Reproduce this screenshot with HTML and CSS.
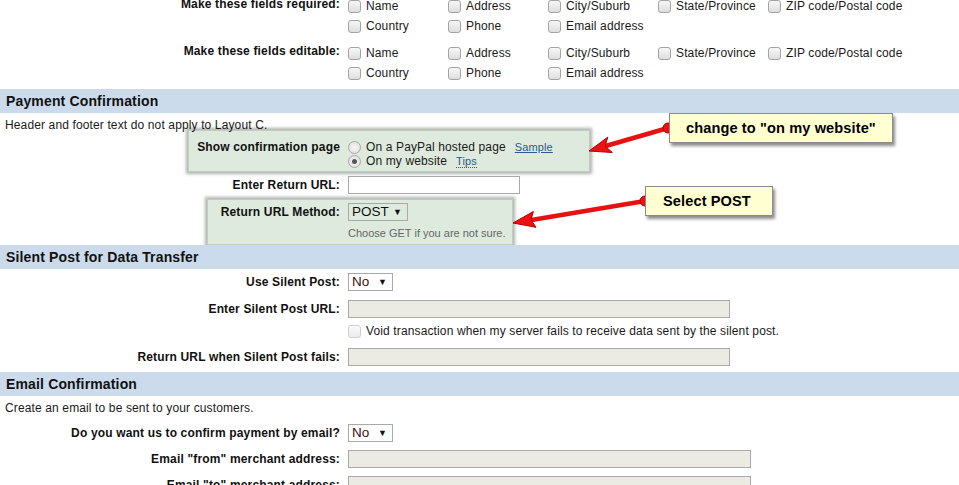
FILE: index.html
```html
<!DOCTYPE html>
<html>
<head>
<meta charset="utf-8">
<link rel="stylesheet" href="styles.css">
</head>
<body>
<div class="page">
  <div class="hl hl-confirm"></div>
  <div class="hl hl-method"></div>

  <div class="content">
    <div class="row top">
      <div class="lbl">Make these fields required:</div>
      <div class="checks">
        <label class="ck"><span class="box"></span>Name</label>
        <label class="ck"><span class="box"></span>Address</label>
        <label class="ck"><span class="box"></span>City/Suburb</label>
        <label class="ck"><span class="box"></span>State/Province</label>
        <label class="ck"><span class="box"></span>ZIP code/Postal code</label>
        <label class="ck"><span class="box"></span>Country</label>
        <label class="ck"><span class="box"></span>Phone</label>
        <label class="ck"><span class="box"></span>Email address</label>
      </div>
    </div>
    <div class="row top group2">
      <div class="lbl">Make these fields editable:</div>
      <div class="checks">
        <label class="ck"><span class="box"></span>Name</label>
        <label class="ck"><span class="box"></span>Address</label>
        <label class="ck"><span class="box"></span>City/Suburb</label>
        <label class="ck"><span class="box"></span>State/Province</label>
        <label class="ck"><span class="box"></span>ZIP code/Postal code</label>
        <label class="ck"><span class="box"></span>Country</label>
        <label class="ck"><span class="box"></span>Phone</label>
        <label class="ck"><span class="box"></span>Email address</label>
      </div>
    </div>

    <div class="sect sect-pay">Payment Confirmation</div>
    <p class="note">Header and footer text do not apply to Layout C.</p>
    <div class="row top r-confirm">
      <div class="lbl lbl-radio">Show confirmation page</div>
      <div class="radios">
        <div class="radio"><span class="rb"></span>On a PayPal hosted page <a class="link">Sample</a></div>
        <div class="radio"><span class="rb on"></span>On my website <a class="tips">Tips</a></div>
      </div>
    </div>
    <div class="row r-8">
      <div class="lbl">Enter Return URL:</div>
      <div><span class="input w172"></span></div>
    </div>
    <div class="row r-9">
      <div class="lbl">Return URL Method:</div>
      <div><span class="select clear w60"><span class="val">POST</span><span class="arr">▼</span></span></div>
    </div>
    <div class="row hint-row">
      <div></div>
      <div class="hint">Choose GET if you are not sure.</div>
    </div>

    <div class="sect sect-silent">Silent Post for Data Transfer</div>
    <div class="row r-4">
      <div class="lbl">Use Silent Post:</div>
      <div><span class="select w45"><span class="val no">No</span><span class="arr">▼</span></span></div>
    </div>
    <div class="row r-9">
      <div class="lbl">Enter Silent Post URL:</div>
      <div><span class="input dis w382"></span></div>
    </div>
    <div class="row void-row">
      <div></div>
      <label class="ck"><span class="box dim"></span>Void transaction when my server fails to receive data sent by the silent post.</label>
    </div>
    <div class="row r-10">
      <div class="lbl">Return URL when Silent Post fails:</div>
      <div><span class="input dis w382"></span></div>
    </div>

    <div class="sect sect-email">Email Confirmation</div>
    <p class="note">Create an email to be sent to your customers.</p>
    <div class="row r-9">
      <div class="lbl">Do you want us to confirm payment by email?</div>
      <div><span class="select w45"><span class="val no">No</span><span class="arr">▼</span></span></div>
    </div>
    <div class="row r-8">
      <div class="lbl">Email "from" merchant address:</div>
      <div><span class="input dis w403"></span></div>
    </div>
    <div class="row r-8">
      <div class="lbl">Email "to" merchant address:</div>
      <div><span class="input dis w403"></span></div>
    </div>
  </div>

  <svg class="arrows" width="959" height="485" viewBox="0 0 959 485">
    <g fill="#ee1111" stroke="#b00000" stroke-width="1">
      <line x1="668" y1="128" x2="604" y2="146.5" stroke="#e81010" stroke-width="4.5"/>
      <polygon points="589,151 607.9,137.1 605,146 612.3,152.5"/>
      <circle cx="668" cy="128" r="5"/>
      <line x1="645" y1="201" x2="530" y2="220.2" stroke="#e81010" stroke-width="4.5"/>
      <polygon points="513,223 533.4,211.5 531,219.8 536,227.3"/>
      <circle cx="645" cy="201" r="5"/>
    </g>
  </svg>
  <div class="callout c1">change to "on my website"</div>
  <div class="callout c2">Select POST</div>
</div>
</body>
</html>
```
FILE: styles.css
```css
html, body {
  margin: 0;
  padding: 0;
  background: #fff;
}
body {
  font-family: "Liberation Sans", Arial, sans-serif;
  font-size: 12px;
  letter-spacing: 0.13px;
  color: #1a1a1a;
  overflow: hidden;
}
.page {
  position: relative;
  width: 959px;
  height: 485px;
  overflow: hidden;
}
.content {
  position: relative;
  z-index: 1;
  margin-top: -4px;
}
.row {
  display: grid;
  grid-template-columns: 340px 1fr;
  column-gap: 8px;
  align-items: center;
}
.row.top { align-items: start; }
.group2 { margin-top: 7px; }
.lbl {
  text-align: right;
  font-weight: bold;
  color: #111;
  white-space: nowrap;
  letter-spacing: 0.16px;
}
.row.top .lbl { line-height: 16px; }
.lbl-radio { line-height: 14px !important; }
.checks {
  display: grid;
  grid-template-columns: 100px 100px 110px 110px auto;
  grid-auto-rows: 20px;
  align-items: center;
}
.ck {
  display: flex;
  align-items: center;
  white-space: nowrap;
}
.box {
  display: inline-block;
  width: 11px;
  height: 11px;
  border: 1px solid #a3a3a3;
  border-radius: 3px;
  background: linear-gradient(#f7f7f7, #dedede);
  margin-right: 5px;
  flex: none;
}
.box.dim {
  border-color: #cfcfcf;
  background: linear-gradient(#fafafa, #ececec);
}
.sect {
  height: 24px;
  line-height: 24px;
  background: #ccdbeb;
  font-weight: bold;
  font-size: 14px;
  letter-spacing: 0.15px;
  color: #111;
  padding-left: 6px;
}
.sect-pay { margin-top: 6px; }
.sect-silent { margin-top: 6px; }
.sect-email { margin-top: 6px; }
.note {
  margin: 5px 0 0 5px;
  line-height: 14px;
}
.r-confirm { margin-top: 8px; }
.radios { line-height: 14px; }
.radio {
  display: flex;
  align-items: center;
  height: 14px;
  white-space: nowrap;
}
.rb {
  display: inline-block;
  width: 11px;
  height: 11px;
  border: 1px solid #a8a8a8;
  border-radius: 50%;
  background: radial-gradient(circle, #f6f6f6 0, #dcdcdc 100%);
  margin-right: 5px;
  flex: none;
  position: relative;
}
.rb.on::after {
  content: "";
  position: absolute;
  left: 3px;
  top: 3px;
  width: 5px;
  height: 5px;
  border-radius: 50%;
  background: #555;
}
.link {
  margin-left: 9px;
  font-size: 11px;
  color: #2d5b8a;
  text-decoration: underline;
}
.tips {
  margin-left: 9px;
  font-size: 11px;
  color: #2d5b8a;
  border-bottom: 1px dotted #2d5b8a;
  line-height: 12px;
}
.r-4 { margin-top: 4px; }
.r-8 { margin-top: 8px; }
.r-9 { margin-top: 9px; }
.r-10 { margin-top: 10px; }
.input {
  display: block;
  height: 16px;
  border: 1px solid #a9a9a9;
  background: #fff;
}
.input.dis { background: #ebebe4; }
.w172 { width: 170px; }
.w382 { width: 380px; }
.w403 { width: 401px; }
.select {
  display: flex;
  align-items: center;
  justify-content: space-between;
  box-sizing: border-box;
  height: 18px;
  border: 1px solid #a9a9a9;
  background: #fff;
  padding: 0 5px 0 3px;
}
.select.clear { background: transparent; }
.w60 { width: 60px; }
.w45 { width: 45px; }
.val { font-size: 13.5px; color: #111; line-height: 16px; letter-spacing: 0; }
.val.no { color: #3a1010; }
.arr { font-size: 9px; color: #111; }
.hint-row { margin-top: 6px; }
.hint {
  font-size: 11px;
  line-height: 12px;
  color: #666;
  letter-spacing: 0;
}
.void-row { margin-top: 6px; line-height: 14px; }
.hl {
  position: absolute;
  z-index: 0;
  box-sizing: border-box;
  background: #deeadd;
  border: 1px solid #bfcdbd;
  box-shadow: 0 0 3px 2px rgba(95, 105, 95, 0.5);
}
.hl-confirm { left: 188px; top: 130px; width: 402px; height: 42px; }
.hl-method { left: 207px; top: 199px; width: 306px; height: 46px; }
.arrows {
  position: absolute;
  left: 0;
  top: 0;
  z-index: 3;
  pointer-events: none;
}
.callout {
  position: absolute;
  z-index: 4;
  box-sizing: border-box;
  background: #ffffd2;
  border: 1px solid #8a8a8a;
  box-shadow: 2px 3px 3px rgba(0, 0, 0, 0.45);
  font-weight: bold;
  font-size: 14.6px;
  letter-spacing: 0.1px;
  color: #000;
  line-height: 28px;
  white-space: nowrap;
}
.c1 { left: 669px; top: 113px; width: 224px; height: 30px; padding-left: 16px; }
.c2 { left: 645px; top: 186px; width: 128px; height: 30px; padding-left: 17px; }
```
